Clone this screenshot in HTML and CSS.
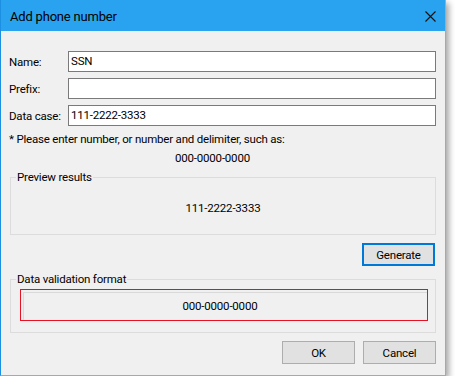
FILE: index.html
```html
<!DOCTYPE html>
<html>
<head>
<meta charset="utf-8">
<link rel="stylesheet" href="styles.css">
</head>
<body>
<div class="window">
  <div class="titlebar">
    <span class="title">Add phone number</span>
    <svg class="close" width="11" height="11" viewBox="0 0 11 11"><path d="M0.5 0.5 L10.5 10.5 M10.5 0.5 L0.5 10.5" stroke="#111" stroke-width="1.1" fill="none"/></svg>
  </div>
  <div class="content">
    <div class="row"><label class="lbl">Name:</label><div class="input">SSN</div></div>
    <div class="row"><label class="lbl">Prefix:</label><div class="input"></div></div>
    <div class="row"><label class="lbl">Data case:</label><div class="input">111-2222-3333</div></div>
    <div class="note">* Please enter number, or number and delimiter, such as:</div>
    <div class="example">000-0000-0000</div>
    <fieldset class="group preview">
      <legend>Preview results</legend>
      <div class="preview-text">111-2222-3333</div>
    </fieldset>
    <div class="gen-row"><button class="btn btn-focus">Generate</button></div>
    <fieldset class="group validation">
      <legend>Data validation format</legend>
      <div class="redbox">000-0000-0000</div>
    </fieldset>
    <div class="footer">
      <button class="btn">OK</button>
      <button class="btn">Cancel</button>
    </div>
  </div>
</div>
</body>
</html>
```

FILE: styles.css
```css
html, body {
  margin: 0;
  padding: 0;
  background: #ffffff;
}
body {
  font-family: "Segoe UI", Roboto, "Liberation Sans", sans-serif;
  font-size: 11.5px;
  letter-spacing: -0.2px;
  color: #000;
}
.window {
  width: 446px;
  height: 376px;
  box-sizing: border-box;
  background: #f0f0f0;
  border-left: 1px solid #1c8fe0;
  border-right: 1px solid #a8a8a8;
  border-bottom: 1px solid #a8a8a8;
  box-shadow: 3px 3px 6px rgba(0, 0, 0, 0.35);
  display: flex;
  flex-direction: column;
}
.titlebar {
  height: 31px;
  background: #29a3ef;
  display: flex;
  align-items: center;
  justify-content: space-between;
  padding: 0 9px 0 9px;
  flex-shrink: 0;
}
.title {
  font-size: 13px;
  letter-spacing: -0.2px;
  color: #000;
  margin-top: 1px;
}
.close {
  display: block;
  margin-top: 1px;
}
.content {
  padding: 20px 9px 0 8px;
  display: flex;
  flex-direction: column;
}
.row {
  display: flex;
  align-items: center;
  height: 21px;
  margin-bottom: 6px;
}
.row:nth-child(3) {
  margin-bottom: 0;
}
.lbl {
  width: 59px;
  flex-shrink: 0;
}
.input {
  flex: 1;
  height: 21px;
  box-sizing: border-box;
  border: 1px solid #7a7a7a;
  background: #fff;
  padding-left: 2px;
  line-height: 19px;
}
.note {
  margin-top: 5px;
  line-height: 16px;
}
.example {
  margin-top: 3px;
  line-height: 16px;
  text-align: center;
  padding-right: 20px;
}
.group {
  margin: 0 0 0 1px;
  padding: 0;
  border: 1px solid #dcdcdc;
  min-width: 0;
}
.group legend {
  padding: 0 1px;
  margin-left: 5px;
  line-height: 16px;
}
.preview {
  margin-top: 3px;
}
.preview-text {
  padding: 15px 0 18px;
  line-height: 16px;
  text-align: center;
}
.gen-row {
  display: flex;
  justify-content: flex-end;
  margin-top: 8px;
}
.btn {
  font-family: inherit;
  font-size: 11.5px;
  letter-spacing: -0.2px;
  color: #000;
  width: 73px;
  height: 23px;
  box-sizing: border-box;
  background: #e1e1e1;
  border: 1px solid #adadad;
  padding: 0;
  margin: 0;
}
.btn-focus {
  border: 2px solid #0078d7;
  margin-right: 1px;
}
.validation {
  margin-top: 5px;
}
.redbox {
  height: 32px;
  box-sizing: border-box;
  margin: 2px 7px 11px 9px;
  border: 1px solid #e81123;
  box-shadow: inset 2px 2px 0 #f0f0f0, inset 3px 3px 0 #d9d9d9;
  display: flex;
  align-items: center;
  justify-content: center;
  padding-top: 2px;
  padding-right: 8px;
}
.footer {
  display: flex;
  justify-content: flex-end;
  gap: 8px;
  margin-top: 8px;
}
```
